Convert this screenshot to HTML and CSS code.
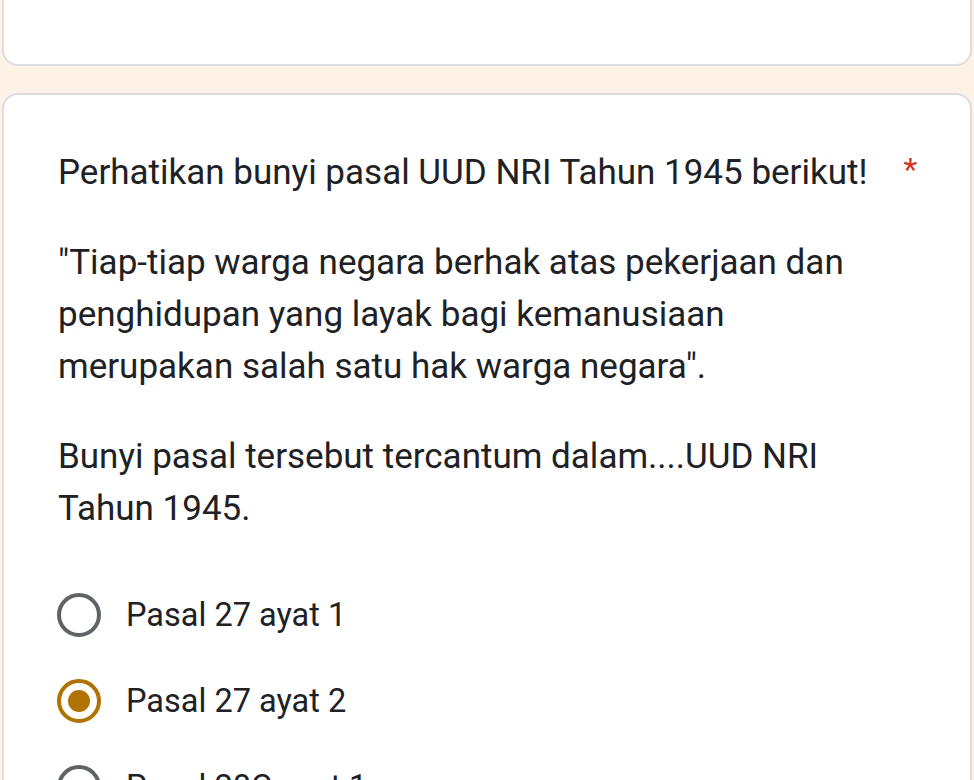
FILE: index.html
```html
<!DOCTYPE html>
<html>
<head>
<meta charset="utf-8">
<link rel="stylesheet" href="styles.css">
</head>
<body>
<div class="page">
  <div class="card card-top"></div>
  <div class="card card-q">
    <div class="title-row">
      <div class="title">Perhatikan bunyi pasal UUD NRI Tahun 1945 berikut!</div>
      <span class="req">*</span>
    </div>
    <p class="para">"Tiap-tiap warga negara berhak atas pekerjaan dan penghidupan yang layak bagi kemanusiaan merupakan salah satu hak warga negara".</p>
    <p class="para">Bunyi pasal tersebut tercantum dalam....UUD NRI Tahun 1945.</p>
    <div class="options">
      <div class="option"><span class="radio"></span><span class="label">Pasal 27 ayat 1</span></div>
      <div class="option"><span class="radio checked"></span><span class="label">Pasal 27 ayat 2</span></div>
      <div class="option"><span class="radio"></span><span class="label">Pasal 28C ayat 1</span></div>
    </div>
  </div>
</div>
</body>
</html>
```
FILE: styles.css
```css
html, body {
  margin: 0;
  padding: 0;
  background: #fef2e6;
  overflow: hidden;
}
.page {
  height: 780px;
  overflow: hidden;
  font-family: Roboto, "Noto Sans", sans-serif;
  color: #202124;
}
.card {
  background: #fff;
  border: 2px solid #dadce0;
  border-radius: 16px;
  margin: 0 2px;
}
.card-top {
  height: 100px;
  margin-top: -38px;
}
.card-q {
  margin-top: 27px;
  padding: 52px 40px 40px 54px;
}
.title-row {
  display: flex;
  align-items: flex-start;
  gap: 36px;
}
.title {
  font-size: 35px;
  line-height: 52px;
  white-space: nowrap;
}
.req {
  color: #d93025;
  font-size: 32px;
  line-height: 52px;
  margin-top: -4px;
}
.para {
  margin: 38px 0 0 0;
  font-size: 35px;
  line-height: 52px;
  max-width: 820px;
}
.options {
  margin-top: 54px;
  display: flex;
  flex-direction: column;
  gap: 34px;
}
.option {
  display: flex;
  align-items: center;
  height: 52px;
}
.radio {
  box-sizing: border-box;
  width: 44px;
  height: 44px;
  border: 4px solid #5f6368;
  border-radius: 50%;
  margin-left: -1px;
  margin-right: 25px;
  display: flex;
  align-items: center;
  justify-content: center;
  flex: none;
}
.radio.checked {
  border-color: #b07200;
}
.radio.checked::after {
  content: "";
  width: 22px;
  height: 22px;
  border-radius: 50%;
  background: #b07200;
}
.label {
  font-size: 32.5px;
  line-height: 52px;
}
```
